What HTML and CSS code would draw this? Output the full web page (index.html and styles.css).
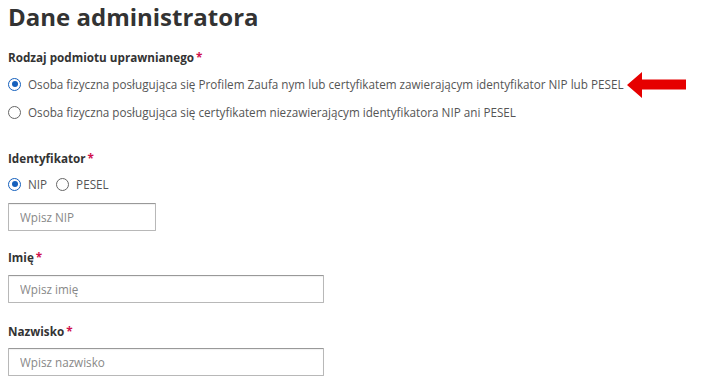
FILE: index.html
```html
<!DOCTYPE html>
<html lang="pl">
<head>
    <meta charset="UTF-8">
    <title>Dane administratora</title>
    <link rel="stylesheet" href="styles.css">
</head>
<body>
    <h1 class="title">Dane administratora</h1>

    <!-- Rodzaj podmiotu -->
    <div class="field field-type">
        <div class="label">Rodzaj podmiotu uprawnianego<span class="req">*</span></div>
        <div class="radio-row">
            <label class="radio"><span class="dot checked"></span>Osoba fizyczna posługująca się Profilem Zaufa nym lub certyfikatem zawierającym identyfikator NIP lub PESEL</label>
            <svg class="arrow" width="62" height="28" viewBox="0 0 62 28">
                <polygon points="0,14 15,1 15,8.5 59,8.5 59,18.5 15,18.5 15,27" fill="#e60000"/>
            </svg>
        </div>
        <div class="radio-row">
            <label class="radio"><span class="dot"></span>Osoba fizyczna posługująca się certyfikatem niezawierającym identyfikatora NIP ani PESEL</label>
        </div>
    </div>

    <!-- Identyfikator -->
    <div class="field field-id">
        <div class="label">Identyfikator<span class="req">*</span></div>
        <div class="radio-row inline">
            <label class="radio"><span class="dot checked"></span>NIP</label>
            <label class="radio"><span class="dot"></span>PESEL</label>
        </div>
        <input class="input short" type="text" placeholder="Wpisz NIP">
    </div>

    <div class="field field-name">
        <div class="label">Imię<span class="req">*</span></div>
        <input class="input" type="text" placeholder="Wpisz imię">
    </div>

    <div class="field field-name">
        <div class="label">Nazwisko<span class="req">*</span></div>
        <input class="input" type="text" placeholder="Wpisz nazwisko">
    </div>
</body>
</html>
```

FILE: styles.css
```css
body {
    margin: 0;
    padding: 0 8px;
    background: #fff;
    font-family: "Open Sans", sans-serif;
    color: #555;
}

.title {
    margin: 0;
    padding-top: 1px;
    font-size: 24px;
    font-weight: 700;
    color: #333;
    line-height: 32px;
}

/* Sekcje formularza */
.field-type {
    margin-top: 16px;
}

.field-id {
    margin-top: 24px;
}

.field-name {
    margin-top: 18px;
}

.field-name + .field-name {
    margin-top: 20px;
}

.label {
    font-size: 11.7px;
    font-weight: 700;
    color: #333;
    line-height: 16px;
}

.field-type .label {
    margin-bottom: 5px;
}

.field-id .label {
    margin-bottom: 4px;
}

.req {
    color: #d0104c;
    margin-left: 2px;
}

.radio-row {
    display: flex;
    align-items: center;
    height: 28px;
}

.radio-row.inline {
    gap: 9px;
}

.radio {
    display: flex;
    align-items: center;
    font-size: 11.7px;
    color: #555;
}

/* Kółko radio */
.dot {
    width: 13px;
    height: 13px;
    border: 1px solid #666;
    border-radius: 50%;
    margin-right: 7px;
    box-sizing: border-box;
    position: relative;
    flex-shrink: 0;
}

.dot.checked {
    border-color: #1560bd;
}

.dot.checked::after {
    content: "";
    position: absolute;
    left: 2.5px;
    top: 2.5px;
    width: 6px;
    height: 6px;
    border-radius: 50%;
    background: #1560bd;
}

.arrow {
    margin-left: 3px;
    margin-top: 2px;
}

.input {
    display: block;
    width: 316px;
    height: 28px;
    box-sizing: border-box;
    border: 1px solid #b8b8b8;
    border-top-color: #999;
    border-radius: 1px;
    box-shadow: inset 0 1px 1px rgba(0, 0, 0, 0.06);
    padding: 0 11px;
    font-family: "Open Sans", sans-serif;
    font-size: 11.7px;
    color: #555;
    margin-top: 10px;
}

.field-id .input {
    margin-top: 5px;
}

.field-name + .field-name .input {
    margin-top: 9px;
}

.input::placeholder {
    color: #888;
}

.input.short {
    width: 148px;
}
```
